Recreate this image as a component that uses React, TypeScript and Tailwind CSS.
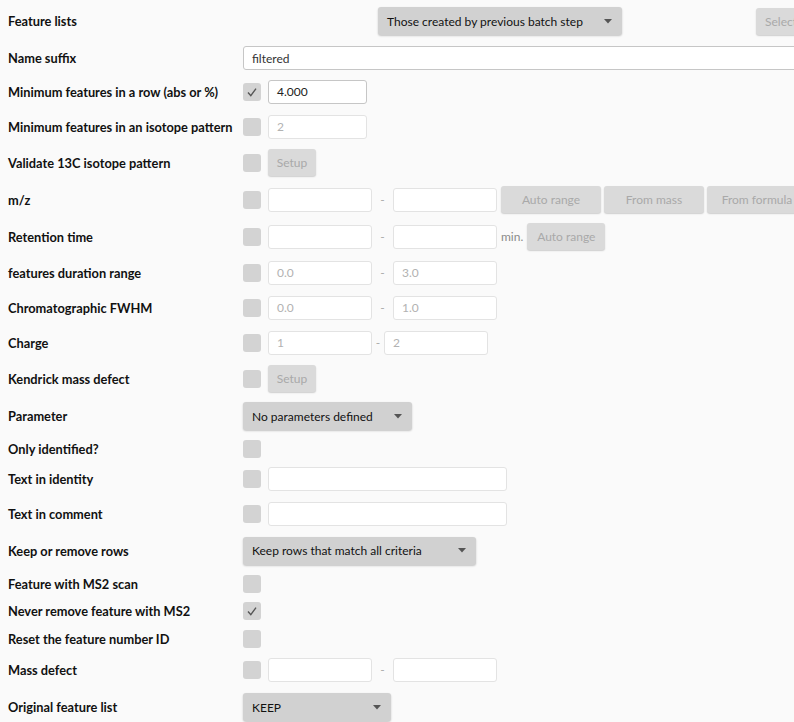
import React from 'react';

const font = { fontFamily: 'Lato, "Open Sans", sans-serif' };

function Label({ children }: { children: React.ReactNode }) {
  return (
    <div className="w-[243px] shrink-0 pl-[8px] pt-[2px] text-[12.8px] font-bold text-[#111]">
      {children}
    </div>
  );
}

function CheckBox({ checked = false }: { checked?: boolean }) {
  return (
    <div className="w-[18px] h-[18px] shrink-0 rounded-[3px] bg-[#d3d3d3] flex items-center justify-center">
      {checked && (
        <svg width="18" height="18" viewBox="0 0 18 18">
          <path d="M5 9.5 L7.8 12.6 L13 5.6" fill="none" stroke="#555" strokeWidth="1.4" />
        </svg>
      )}
    </div>
  );
}

function Field({
  value = '',
  disabled = false,
  className = 'w-[104px]',
}: {
  value?: string;
  disabled?: boolean;
  className?: string;
}) {
  return (
    <div
      className={`h-[24px] shrink-0 rounded-[3px] border bg-white flex items-center px-[8px] pt-[1px] text-[12px] ${
        disabled ? 'border-[#e3e3e3] text-[#b2b2b2]' : 'border-[#c6c6c6] text-[#222]'
      } ${className}`}
    >
      {value}
    </div>
  );
}

function Btn({ children, className = '' }: { children: React.ReactNode; className?: string }) {
  return (
    <div
      className={`h-[27px] shrink-0 rounded-[3px] bg-[#dadada] text-[#a9a9a9] text-[12px] pt-[1px] flex items-center justify-center shadow-[0_1px_1.5px_rgba(0,0,0,0.18)] ${className}`}
    >
      {children}
    </div>
  );
}

function Dropdown({ text, className }: { text: string; className: string }) {
  return (
    <div
      className={`h-[28px] shrink-0 rounded-[3px] bg-[#d1d1d1] flex items-center justify-between pl-[9px] pr-[10px] text-[12px] text-[#111] shadow-[0_1px_2px_rgba(0,0,0,0.22)] ${className}`}
    >
      <span className="pt-[1px]">{text}</span>
      <svg width="8" height="5" viewBox="0 0 8 5">
        <path d="M0 0 L8 0 L4 4.5 Z" fill="#555" />
      </svg>
    </div>
  );
}

function Dash({ className = 'w-[21px]' }: { className?: string }) {
  return <div className={`shrink-0 text-center text-[12px] text-[#aaa] ${className}`}>-</div>;
}

function Row({ h, label, children }: { h: string; label: string; children?: React.ReactNode }) {
  return (
    <div className={`flex items-center ${h}`}>
      <Label>{label}</Label>
      <div className="flex items-center">{children}</div>
    </div>
  );
}

export default function App() {
  return (
    <div className="w-[794px] h-[722px] overflow-hidden bg-[#fafafa]" style={font}>
      <div className="flex flex-col">
        <Row h="h-[42px]" label="Feature lists">
          <Dropdown text="Those created by previous batch step" className="ml-[135px] w-[244px]" />
          <Btn className="ml-[134px] w-[80px] justify-start pl-[9px]">Select</Btn>
        </Row>
        <Row h="h-[32px]" label="Name suffix">
          <Field value="filtered" className="w-[600px] text-[#333]" />
        </Row>
        <Row h="h-[35px]" label="Minimum features in a row (abs or %)">
          <CheckBox checked />
          <Field value="4.000" className="ml-[7px] w-[99px]" />
        </Row>
        <Row h="h-[35px]" label="Minimum features in an isotope pattern">
          <CheckBox />
          <Field value="2" disabled className="ml-[7px] w-[99px]" />
        </Row>
        <Row h="h-[37px]" label="Validate 13C isotope pattern">
          <CheckBox />
          <Btn className="ml-[7px] w-[48px]">Setup</Btn>
        </Row>
        <Row h="h-[37px]" label="m/z">
          <CheckBox />
          <Field disabled className="ml-[7px] w-[104px]" />
          <Dash />
          <Field disabled />
          <Btn className="ml-[4px] w-[100px]">Auto range</Btn>
          <Btn className="ml-[3px] w-[100px]">From mass</Btn>
          <Btn className="ml-[3px] w-[100px]">From formula</Btn>
        </Row>
        <Row h="h-[37px]" label="Retention time">
          <CheckBox />
          <Field disabled className="ml-[7px] w-[104px]" />
          <Dash />
          <Field disabled />
          <span className="ml-[4px] pt-[1px] text-[12px] text-[#8a8a8a]">min.</span>
          <Btn className="ml-[4px] w-[78px]">Auto range</Btn>
        </Row>
        <Row h="h-[35px]" label="features duration range">
          <CheckBox />
          <Field value="0.0" disabled className="ml-[7px] w-[104px]" />
          <Dash />
          <Field value="3.0" disabled />
        </Row>
        <Row h="h-[35px]" label="Chromatographic FWHM">
          <CheckBox />
          <Field value="0.0" disabled className="ml-[7px] w-[104px]" />
          <Dash />
          <Field value="1.0" disabled />
        </Row>
        <Row h="h-[35px]" label="Charge">
          <CheckBox />
          <Field value="1" disabled className="ml-[7px] w-[104px]" />
          <Dash className="w-[12px]" />
          <Field value="2" disabled />
        </Row>
        <Row h="h-[37px]" label="Kendrick mass defect">
          <CheckBox />
          <Btn className="ml-[7px] w-[48px]">Setup</Btn>
        </Row>
        <Row h="h-[38px]" label="Parameter">
          <Dropdown text="No parameters defined" className="w-[169px]" />
        </Row>
        <Row h="h-[27px]" label="Only identified?">
          <CheckBox />
        </Row>
        <Row h="h-[34px]" label="Text in identity">
          <CheckBox />
          <Field disabled className="ml-[7px] w-[239px]" />
        </Row>
        <Row h="h-[35px]" label="Text in comment">
          <CheckBox />
          <Field disabled className="ml-[7px] w-[239px]" />
        </Row>
        <Row h="h-[39px]" label="Keep or remove rows">
          <Dropdown text="Keep rows that match all criteria" className="w-[233px]" />
        </Row>
        <Row h="h-[27px]" label="Feature with MS2 scan">
          <CheckBox />
        </Row>
        <Row h="h-[28px]" label="Never remove feature with MS2">
          <CheckBox checked />
        </Row>
        <Row h="h-[28px]" label="Reset the feature number ID">
          <CheckBox />
        </Row>
        <Row h="h-[34px]" label="Mass defect">
          <CheckBox />
          <Field disabled className="ml-[7px] w-[104px]" />
          <Dash />
          <Field disabled />
        </Row>
        <Row h="h-[40px]" label="Original feature list">
          <Dropdown text="KEEP" className="w-[148px]" />
        </Row>
      </div>
    </div>
  );
}
